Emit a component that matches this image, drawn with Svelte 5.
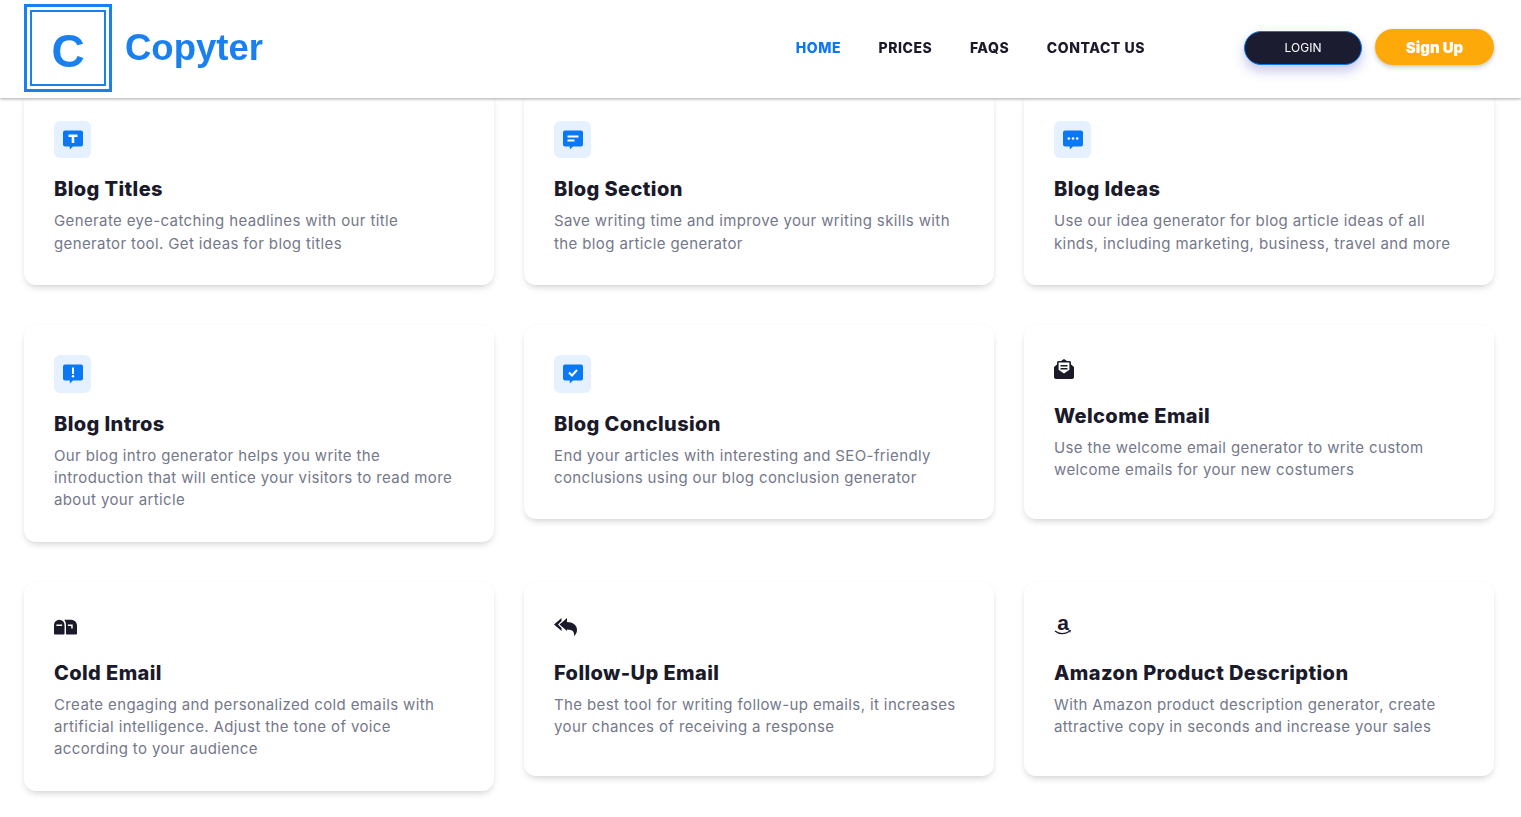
<script>
  const cards = [
    { icon: "t", title: "Blog Titles", text: "Generate eye-catching headlines with our title generator tool. Get ideas for blog titles" },
    { icon: "lines", title: "Blog Section", text: "Save writing time and improve your writing skills with the blog article generator" },
    { icon: "dots", title: "Blog Ideas", text: "Use our idea generator for blog article ideas of all kinds, including marketing, business, travel and more" },
    { icon: "bang", title: "Blog Intros", text: "Our blog intro generator helps you write the introduction that will entice your visitors to read more about your article" },
    { icon: "check", title: "Blog Conclusion", text: "End your articles with interesting and SEO-friendly conclusions using our blog conclusion generator" },
    { icon: "envelope", title: "Welcome Email", text: "Use the welcome email generator to write custom welcome emails for your new costumers" },
    { icon: "mailbox", title: "Cold Email", text: "Create engaging and personalized cold emails with artificial intelligence. Adjust the tone of voice according to your audience" },
    { icon: "reply", title: "Follow-Up Email", text: "The best tool for writing follow-up emails, it increases your chances of receiving a response" },
    { icon: "amazon", title: "Amazon Product Description", text: "With Amazon product description generator, create attractive copy in seconds and increase your sales" }
  ];
  const bubbles = ["t", "lines", "dots", "bang", "check"];
  const nav = ["HOME", "PRICES", "FAQS", "CONTACT US"];
</script>

<header>
  <a class="logo" href="#home">
    <span class="mark"><span class="mark-inner">C</span></span>
    <span class="brand">Copyter</span>
  </a>
  <nav>
    {#each nav as item, i}
      <a href="#nav" class:active={i === 0}>{item}</a>
    {/each}
  </nav>
  <div class="actions">
    <button class="login">LOGIN</button>
    <button class="signup">Sign Up</button>
  </div>
</header>

<main>
  {#each cards as card}
    <article class="card">
      {#if bubbles.includes(card.icon)}
        <div class="icon-box">
          <svg width="20" height="20" viewBox="0 0 20 20">
            <path fill="#0a78f5" d="M2 0.5h16a2 2 0 0 1 2 2v12a2 2 0 0 1-2 2h-8l-3.2 3v-3H2a2 2 0 0 1-2-2v-12a2 2 0 0 1 2-2z" />
            {#if card.icon === "t"}
              <path fill="#fff" d="M5.5 4.5h9v2.4h-3.2v6.1H8.700V6.900H5.500z" />
            {:else if card.icon === "lines"}
              <path fill="#fff" d="M4.500 5.500h11v2h-11zM4.500 9.500h7v2h-7z" />
            {:else if card.icon === "dots"}
              <circle fill="#fff" cx="5.800" cy="8.500" r="1.300" />
              <circle fill="#fff" cx="10" cy="8.500" r="1.300" />
              <circle fill="#fff" cx="14.200" cy="8.500" r="1.300" />
            {:else if card.icon === "bang"}
              <path fill="#fff" d="M9 3.500h2v6.500H9z" />
              <circle fill="#fff" cx="10" cy="12.300" r="1.200" />
            {:else}
              <path fill="none" stroke="#fff" stroke-width="2" d="M6 8.500l3 3 5-5.500" />
            {/if}
          </svg>
        </div>
      {:else}
        <div class="glyph">
          {#if card.icon === "envelope"}
            <svg class="envelope" width="20" height="20" viewBox="0 0 20 20">
              <path fill="#1a1a2b" d="M0 8l3-2.400V3.500A1.500 1.500 0 0 1 4.500 2H7l3-2 3 2h2.500A1.500 1.500 0 0 1 17 3.500v2.100L20 8v10a2 2 0 0 1-2 2H2a2 2 0 0 1-2-2z" />
              <path fill="#fff" d="M4.600 3.600h10.800v7.100L10 14.600l-5.400-3.900z" />
              <path fill="#1a1a2b" d="M6.500 6h7v1.500h-7zM6.500 9h7v1.500h-7z" />
            </svg>
          {:else if card.icon === "mailbox"}
            <svg width="23" height="16" viewBox="0 0 24 16">
              <path fill="#1a1a2b" d="M0 15V6a5.500 5.500 0 0 1 11 0v9a0.800 0.800 0 0 1-.8.800H.8A.8.800 0 0 1 0 15z" />
              <path fill="#1a1a2b" d="M12.500 15V6c0-2 -.5-3.800-1.800-5.500H18a6 6 0 0 1 6 5.500v9a.8.800 0 0 1-.8.800h-9.900a.8.800 0 0 1-.8-.8z" />
              <path fill="#fff" d="M2.500 5.500h6v1.500h-6zM14.500 5.500h5v4h-1.500V7h-3.500z" />
            </svg>
          {:else if card.icon === "reply"}
            <svg width="24" height="20" viewBox="0 0 24 20">
              <path fill="#1a1a2b" d="M0 7.500L7.500 1v3L4 7.500l3.500 3.500v3z" />
              <path fill="#1a1a2b" d="M5.500 7.500L13 1v4c5.500 .2 10 2.600 10 8 0 2.800-1.400 4.800-3 6 .6-3.800-1-6.400-7-6.500V14z" />
            </svg>
          {:else}
            <span class="amazon">
              <span class="amazon-a">a</span>
              <svg width="18" height="6" viewBox="0 0 18 6">
                <path fill="none" stroke="#1a1a2b" stroke-width="1.200" d="M1 1c4 3.400 10 3.400 14 .4" />
                <path fill="#1a1a2b" d="M14 .3l3-.3-.8 2.800z" />
              </svg>
            </span>
          {/if}
        </div>
      {/if}
      <h3>{card.title}</h3>
      <p>{card.text}</p>
    </article>
  {/each}
</main>

<style>
  :global(body) {
    background: #fff;
    overflow: hidden;
    font-family: Inter, "Open Sans", sans-serif;
    color: #1a1a2b;
  }

  header {
    position: fixed;
    top: 0;
    left: 0;
    right: 0;
    z-index: 5;
    box-sizing: border-box;
    height: 98px;
    padding: 4px 27px 6px 24px;
    display: flex;
    align-items: center;
    background: #fff;
    box-shadow: 0 1px 3px rgba(0, 0, 0, 0.35);
  }

  .logo {
    display: flex;
    align-items: center;
    gap: 13px;
    text-decoration: none;
    color: #1a80f0;
  }

  .mark {
    box-sizing: border-box;
    width: 88px;
    height: 88px;
    padding: 3px;
    border: 3.5px solid #1a80f0;
  }

  .mark-inner {
    box-sizing: border-box;
    display: flex;
    align-items: center;
    justify-content: center;
    height: 100%;
    padding-top: 5px;
    border: 2px solid #1a80f0;
    font: bold 46px "Liberation Sans", sans-serif;
  }

  .brand {
    font: bold 36.500px "Liberation Sans", sans-serif;
    margin-bottom: 1px;
  }

  nav {
    margin-left: auto;
    margin-bottom: 2px;
    display: flex;
    gap: 37.500px;
  }

  nav a {
    font-size: 14px;
    font-weight: 800;
    letter-spacing: 0.55px;
    text-decoration: none;
    color: #1a1a2b;
  }

  nav a.active {
    color: #0a78f5;
  }

  .actions {
    margin-left: 99px;
    margin-bottom: 2px;
    display: flex;
    align-items: center;
    gap: 13px;
  }

  button {
    font-family: inherit;
    cursor: pointer;
  }

  .login {
    width: 118px;
    height: 34px;
    margin-top: 2px;
    padding-bottom: 3px;
    border: 1px solid #0a78f5;
    border-radius: 17px;
    background: #1c1c30;
    color: #fff;
    font-size: 12px;
    box-shadow: 0 6px 12px rgba(60, 70, 200, 0.3);
  }

  .signup {
    width: 119px;
    height: 36px;
    border: 0;
    border-radius: 18px;
    background: #fea90a;
    color: #fff;
    font-size: 15px;
    font-weight: 900;
    box-shadow: 0 2px 5px rgba(0, 0, 0, 0.22);
  }

  main {
    display: grid;
    grid-template-columns: repeat(3, 470px);
    column-gap: 30px;
    row-gap: 39.800px;
    align-items: start;
    padding: 90.950px 27px 20px 24px;
  }

  .card {
    box-sizing: border-box;
    min-height: 194px;
    padding: 30px;
    border-radius: 12px;
    background: #fff;
    box-shadow: 0 4px 7px -2px rgba(0, 0, 0, 0.18), 0 0 3px rgba(0, 0, 0, 0.03);
  }

  .icon-box {
    width: 37px;
    height: 37.500px;
    margin-bottom: 16px;
    display: flex;
    align-items: center;
    justify-content: center;
    border-radius: 6px;
    background: #e6f1ff;
  }

  .glyph {
    height: 30px;
    margin-bottom: 16px;
    display: flex;
    align-items: center;
  }

  .envelope {
    margin-top: -3px;
  }

  .amazon {
    display: flex;
    flex-direction: column;
    align-items: center;
    width: 18px;
    margin-bottom: 2px;
  }

  .amazon-a {
    font: bold 21px/15px "Liberation Sans", sans-serif;
    color: #1a1a2b;
  }

  h3 {
    margin: 0 0 6px;
    font-size: 20px;
    line-height: 30px;
    font-weight: 800;
    letter-spacing: 0.4px;
    color: #1a1a2b;
  }

  p {
    margin: 0;
    font-size: 15px;
    line-height: 22.400px;
    letter-spacing: 0.38px;
    color: #74788a;
  }
</style>
